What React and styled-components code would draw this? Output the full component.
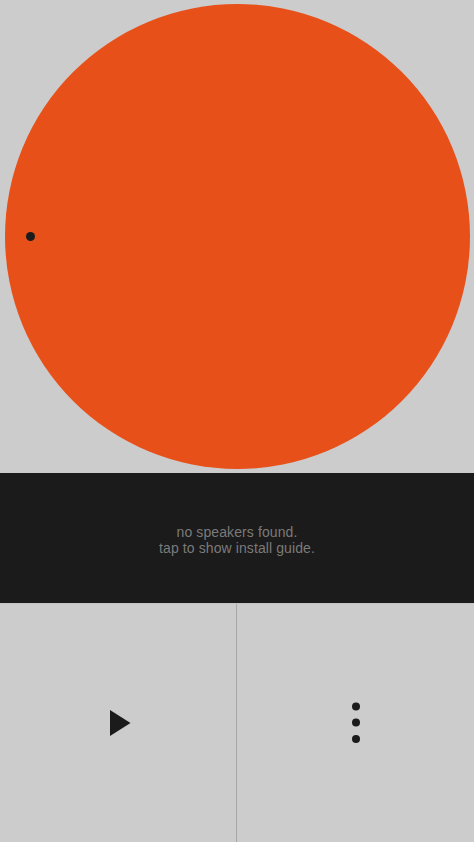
import React from 'react';
import styled, { createGlobalStyle } from 'styled-components';

const GlobalStyle = createGlobalStyle`
  html, body {
    margin: 0;
    padding: 0;
    background: #cccccc;
  }
  body {
    font-family: "Liberation Sans", Arial, sans-serif;
  }
`;

const Screen = styled.div`
  width: 474px;
  height: 842px;
  display: flex;
  flex-direction: column;
  background: #cccccc;
  overflow: hidden;
`;

const Stage = styled.div`
  height: 473px;
  display: flex;
  align-items: center;
  justify-content: center;
  flex-shrink: 0;
`;

const Disc = styled.div`
  position: relative;
  width: 465px;
  height: 465px;
  border-radius: 50%;
  background: #e8501a;
`;

const Marker = styled.span`
  position: absolute;
  left: 21px;
  top: 228px;
  width: 9px;
  height: 9px;
  border-radius: 50%;
  background: #1b1b1b;
`;

const Notice = styled.div`
  height: 130px;
  flex-shrink: 0;
  background: #1b1b1b;
  display: flex;
  align-items: center;
  justify-content: center;
  padding-top: 3px;
  box-sizing: border-box;
  text-align: center;
  color: #7a7a7a;
  font-size: 14px;
  letter-spacing: 0.1px;
  line-height: 16px;
  cursor: pointer;
`;

const Controls = styled.div`
  flex: 1;
  display: grid;
  grid-template-columns: 236px 1px 1fr;
  border-top: 1px solid #c4c4c4;
`;

const Divider = styled.div`
  background: #a8a8a8;
`;

const ControlButton = styled.button`
  border: 0;
  background: transparent;
  padding: 0 0 0 ${(p) => p.$shift || 0}px;
  display: flex;
  align-items: center;
  justify-content: center;
  cursor: pointer;
`;

const App = () => (
  <>
    <GlobalStyle />
    <Screen>
      <Stage>
        <Disc>
          <Marker />
        </Disc>
      </Stage>
      <Notice>
        no speakers found.
        <br />
        tap to show install guide.
      </Notice>
      <Controls>
        <ControlButton $shift={3}>
          <svg width="22" height="26" viewBox="0 0 22 26">
            <polygon points="1,0 21.5,13 1,26" fill="#1b1b1b" />
          </svg>
        </ControlButton>
        <Divider />
        <ControlButton>
          <svg width="10" height="42" viewBox="0 0 10 42">
            <circle cx="5" cy="4.5" r="4" fill="#1b1b1b" />
            <circle cx="5" cy="20.5" r="4" fill="#1b1b1b" />
            <circle cx="5" cy="37" r="4" fill="#1b1b1b" />
          </svg>
        </ControlButton>
      </Controls>
    </Screen>
  </>
);

export default App;
